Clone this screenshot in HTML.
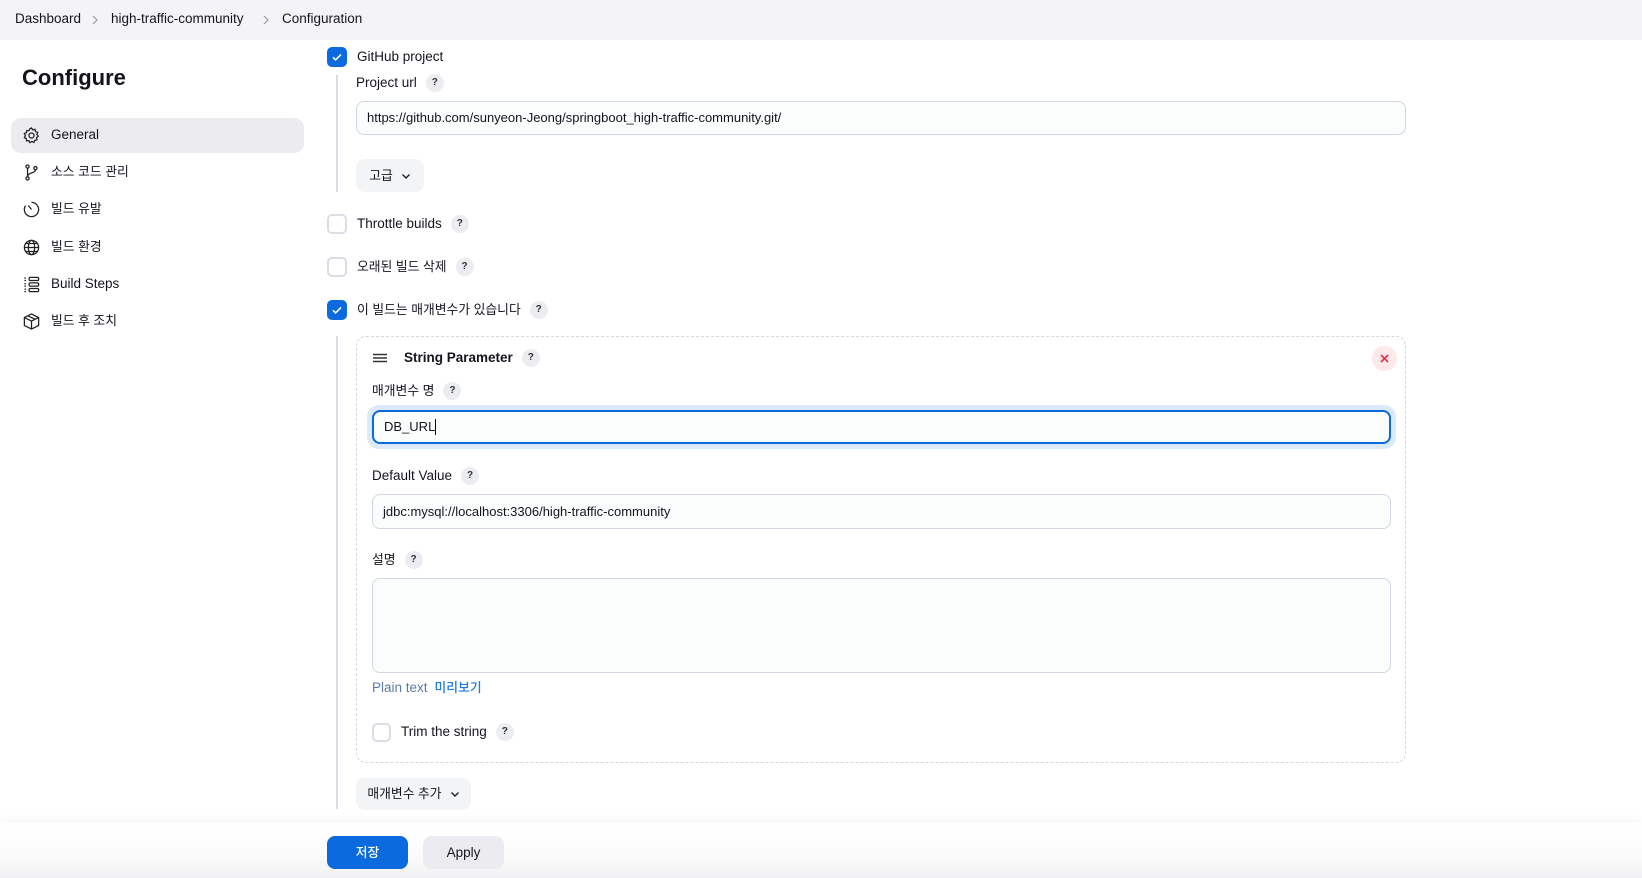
<!DOCTYPE html>
<html><head><meta charset="utf-8"><style>
*{box-sizing:border-box;margin:0;padding:0}
body{width:1642px;height:878px;position:relative;background:#fff;font-family:"Liberation Sans","Noto Sans CJK KR",sans-serif;color:#14141f;font-size:13.5px;line-height:18px;overflow:hidden}
.a{position:absolute}
.row{position:absolute;display:flex;align-items:center;gap:9px;height:20px;white-space:nowrap}
.k{font-size:12.8px}
.bc{left:0;top:0;width:1642px;height:40px;background:#f4f4f7}
.bc span{position:absolute;top:10px;font-size:13.5px;font-weight:500}
.ic{left:22px;width:19px;height:19px}
.cb{width:20px;height:20px;border-radius:5px;border:2px solid #d9dde5;background:#fff}
.cb.on{background:#0b6bde;border-color:#0b6bde}
.q{width:18px;height:18px;flex:none;border-radius:50%;background:#ebedf1;font-size:10px;font-weight:bold;text-align:center;line-height:18px;color:#333}
.inp{border:1.5px solid #d0d7e2;border-radius:8px;background:#fbfcfc;padding-left:10px;font-size:13px;display:flex;align-items:center}
.btn{background:#f3f4f6;border-radius:9px;display:flex;align-items:center;justify-content:center;font-size:12.8px;gap:8px}
.vl{width:2px;background:#d8dde6}
</style></head><body>
<div class="a bc">
<span style="left:15px">Dashboard</span>
<svg class="a" style="left:91px;top:15px" width="8" height="10" viewBox="0 0 8 10"><path d="M2 1l4 4-4 4" stroke="#999" stroke-width="1.2" fill="none"/></svg>
<span style="left:111px">high-traffic-community</span>
<svg class="a" style="left:262px;top:15px" width="8" height="10" viewBox="0 0 8 10"><path d="M2 1l4 4-4 4" stroke="#999" stroke-width="1.2" fill="none"/></svg>
<span style="left:282px">Configuration</span>
</div>
<div class="a" style="left:22px;top:65px;font-size:22px;line-height:26px;font-weight:bold">Configure</div>
<div class="a" style="left:11px;top:118px;width:293px;height:35px;background:#ececf0;border-radius:10px"></div>
<svg class="a ic" style="top:126px" viewBox="0 0 24 24" fill="none" stroke="#222" stroke-width="1.6"><circle cx="12" cy="12" r="3.2"/><path d="M12 2.5l1.6 2.4 2.8-.7.7 2.8 2.7 1-1 2.7L20.5 13l-2.2 1.7.6 2.8-2.8.5-1 2.7-2.6-1.2L10 21l-1.4-2.5-2.8.2-.3-2.9L3 14.7l1.3-2.6L3 9.5l2.6-1 .3-2.8 2.8.3L10 3.5z"/></svg>
<div class="row" style="left:51px;top:125px;font-weight:500">General</div>
<svg class="a ic" style="top:163px" viewBox="0 0 24 24" fill="none" stroke="#222" stroke-width="1.6"><circle cx="7" cy="4.5" r="2"/><circle cx="7" cy="19.5" r="2"/><circle cx="17" cy="6.5" r="2"/><path d="M7 6.5v11M17 8.5c0 5-10 3-10 9"/></svg>
<div class="row k" style="left:51px;top:162px">소스 코드 관리</div>
<svg class="a ic" style="top:200px" viewBox="0 0 24 24" fill="none" stroke="#222" stroke-width="1.6"><path d="M12 3a9 9 0 1 1-7.5 4"/><path d="M8 7l4 5"/></svg>
<div class="row k" style="left:51px;top:199px">빌드 유발</div>
<svg class="a ic" style="top:238px" viewBox="0 0 24 24" fill="none" stroke="#222" stroke-width="1.6"><circle cx="12" cy="12" r="9"/><ellipse cx="12" cy="12" rx="4" ry="9"/><path d="M3 12h18M4.5 7h15M4.5 17h15"/></svg>
<div class="row k" style="left:51px;top:237px">빌드 환경</div>
<svg class="a ic" style="top:275px" viewBox="0 0 24 24" fill="none" stroke="#222" stroke-width="1.6"><rect x="9" y="3" width="12" height="4" rx="1.5"/><rect x="9" y="10" width="12" height="4" rx="1.5"/><rect x="9" y="17" width="12" height="4" rx="1.5"/><path d="M3 4h2M3 7h2M3 11h2M3 14h2M3 18h2M3 21h2"/></svg>
<div class="row" style="left:51px;top:274px">Build Steps</div>
<svg class="a ic" style="top:312px" viewBox="0 0 24 24" fill="none" stroke="#222" stroke-width="1.6"><path d="M12 2.5l9 4.5v10l-9 4.5-9-4.5V7z"/><path d="M3 7l9 4.5L21 7M12 11.5V21.5M7.5 4.8l9 4.5"/></svg>
<div class="row k" style="left:51px;top:311px">빌드 후 조치</div>

<div class="a cb on" style="left:327px;top:47px"></div>
<svg class="a" style="left:331px;top:51px" width="12" height="12" viewBox="0 0 12 12"><path d="M2 6.3l2.6 2.6L10 3.4" stroke="#fff" stroke-width="1.6" fill="none"/></svg>
<div class="row" style="left:357px;top:47px">GitHub project</div>
<div class="a vl" style="left:336px;top:75px;height:117px"></div>
<div class="row" style="left:356px;top:73px">Project url<span class="q">?</span></div>
<div class="a inp" style="left:356px;top:101px;width:1050px;height:34px">https://github.com/sunyeon-Jeong/springboot_high-traffic-community.git/</div>
<div class="a btn" style="left:356px;top:159px;width:68px;height:33px">고급<svg width="10" height="10" viewBox="0 0 10 10"><path d="M1.5 3.5L5 7l3.5-3.5" stroke="#222" stroke-width="1.4" fill="none"/></svg></div>

<div class="a cb" style="left:327px;top:214px"></div>
<div class="row" style="left:357px;top:214px">Throttle builds<span class="q">?</span></div>
<div class="a cb" style="left:327px;top:257px"></div>
<div class="row k" style="left:357px;top:257px">오래된 빌드 삭제<span class="q">?</span></div>
<div class="a cb on" style="left:327px;top:300px"></div>
<svg class="a" style="left:331px;top:304px" width="12" height="12" viewBox="0 0 12 12"><path d="M2 6.3l2.6 2.6L10 3.4" stroke="#fff" stroke-width="1.6" fill="none"/></svg>
<div class="row k" style="left:357px;top:300px">이 빌드는 매개변수가 있습니다<span class="q">?</span></div>
<div class="a vl" style="left:336px;top:336px;height:473px"></div>

<div class="a" style="left:356px;top:336px;width:1050px;height:427px;border:1.5px dashed #d3d7de;border-radius:10px"></div>
<svg class="a" style="left:372px;top:351px" width="16" height="14" viewBox="0 0 16 14"><path d="M1 3.5h14M1 7h14M1 10.5h14" stroke="#333" stroke-width="1.5"/></svg>
<div class="row" style="left:404px;top:348px;font-weight:bold">String Parameter<span class="q" style="font-weight:bold">?</span></div>
<div class="a" style="left:1372px;top:346px;width:25px;height:25px;border-radius:50%;background:#fde8ea"></div>
<svg class="a" style="left:1379px;top:353px" width="11" height="11" viewBox="0 0 11 11"><path d="M2 2l7 7M9 2l-7 7" stroke="#e6324b" stroke-width="1.6"/></svg>
<div class="row k" style="left:372px;top:381px">매개변수 명<span class="q">?</span></div>
<div class="a" style="left:367px;top:405px;width:1029px;height:44px;border-radius:12px;background:#dbe9fb"></div>
<div class="a inp" style="left:372px;top:410px;width:1019px;height:34px;border:2px solid #0b6bde;background:#fbfcfc">DB_URL<span style="display:inline-block;width:1px;height:16px;background:#000"></span></div>
<div class="row" style="left:372px;top:466px">Default Value<span class="q">?</span></div>
<div class="a inp" style="left:372px;top:494px;width:1019px;height:35px">jdbc:mysql://localhost:3306/high-traffic-community</div>
<div class="row k" style="left:372px;top:550px">설명<span class="q">?</span></div>
<div class="a inp" style="left:372px;top:578px;width:1019px;height:95px"></div>
<div class="row" style="left:372px;top:678px;gap:7px"><span style="color:#5b7ba6">Plain text</span><span class="k" style="color:#1f7be6;font-weight:500">미리보기</span></div>
<div class="a cb" style="left:372px;top:723px;width:19px;height:19px"></div>
<div class="row" style="left:401px;top:722px">Trim the string<span class="q">?</span></div>
<div class="a btn" style="left:356px;top:778px;width:115px;height:32px">매개변수 추가<svg width="10" height="10" viewBox="0 0 10 10"><path d="M1.5 3.5L5 7l3.5-3.5" stroke="#222" stroke-width="1.4" fill="none"/></svg></div>

<div class="a" style="left:0;top:823px;width:1642px;height:55px;background:linear-gradient(#fff,#fbfbfb 60%,#f1f1f3);box-shadow:0 -4px 10px rgba(0,0,0,0.03)"></div>
<div class="a" style="left:327px;top:836px;width:81px;height:33px;border-radius:8px;background:#0b6bde;color:#fff;display:flex;align-items:center;justify-content:center;font-weight:500;font-size:12.8px">저장</div>
<div class="a btn" style="left:423px;top:836px;width:81px;height:33px;background:#ececf0;font-size:13.5px">Apply</div>
</body></html>
